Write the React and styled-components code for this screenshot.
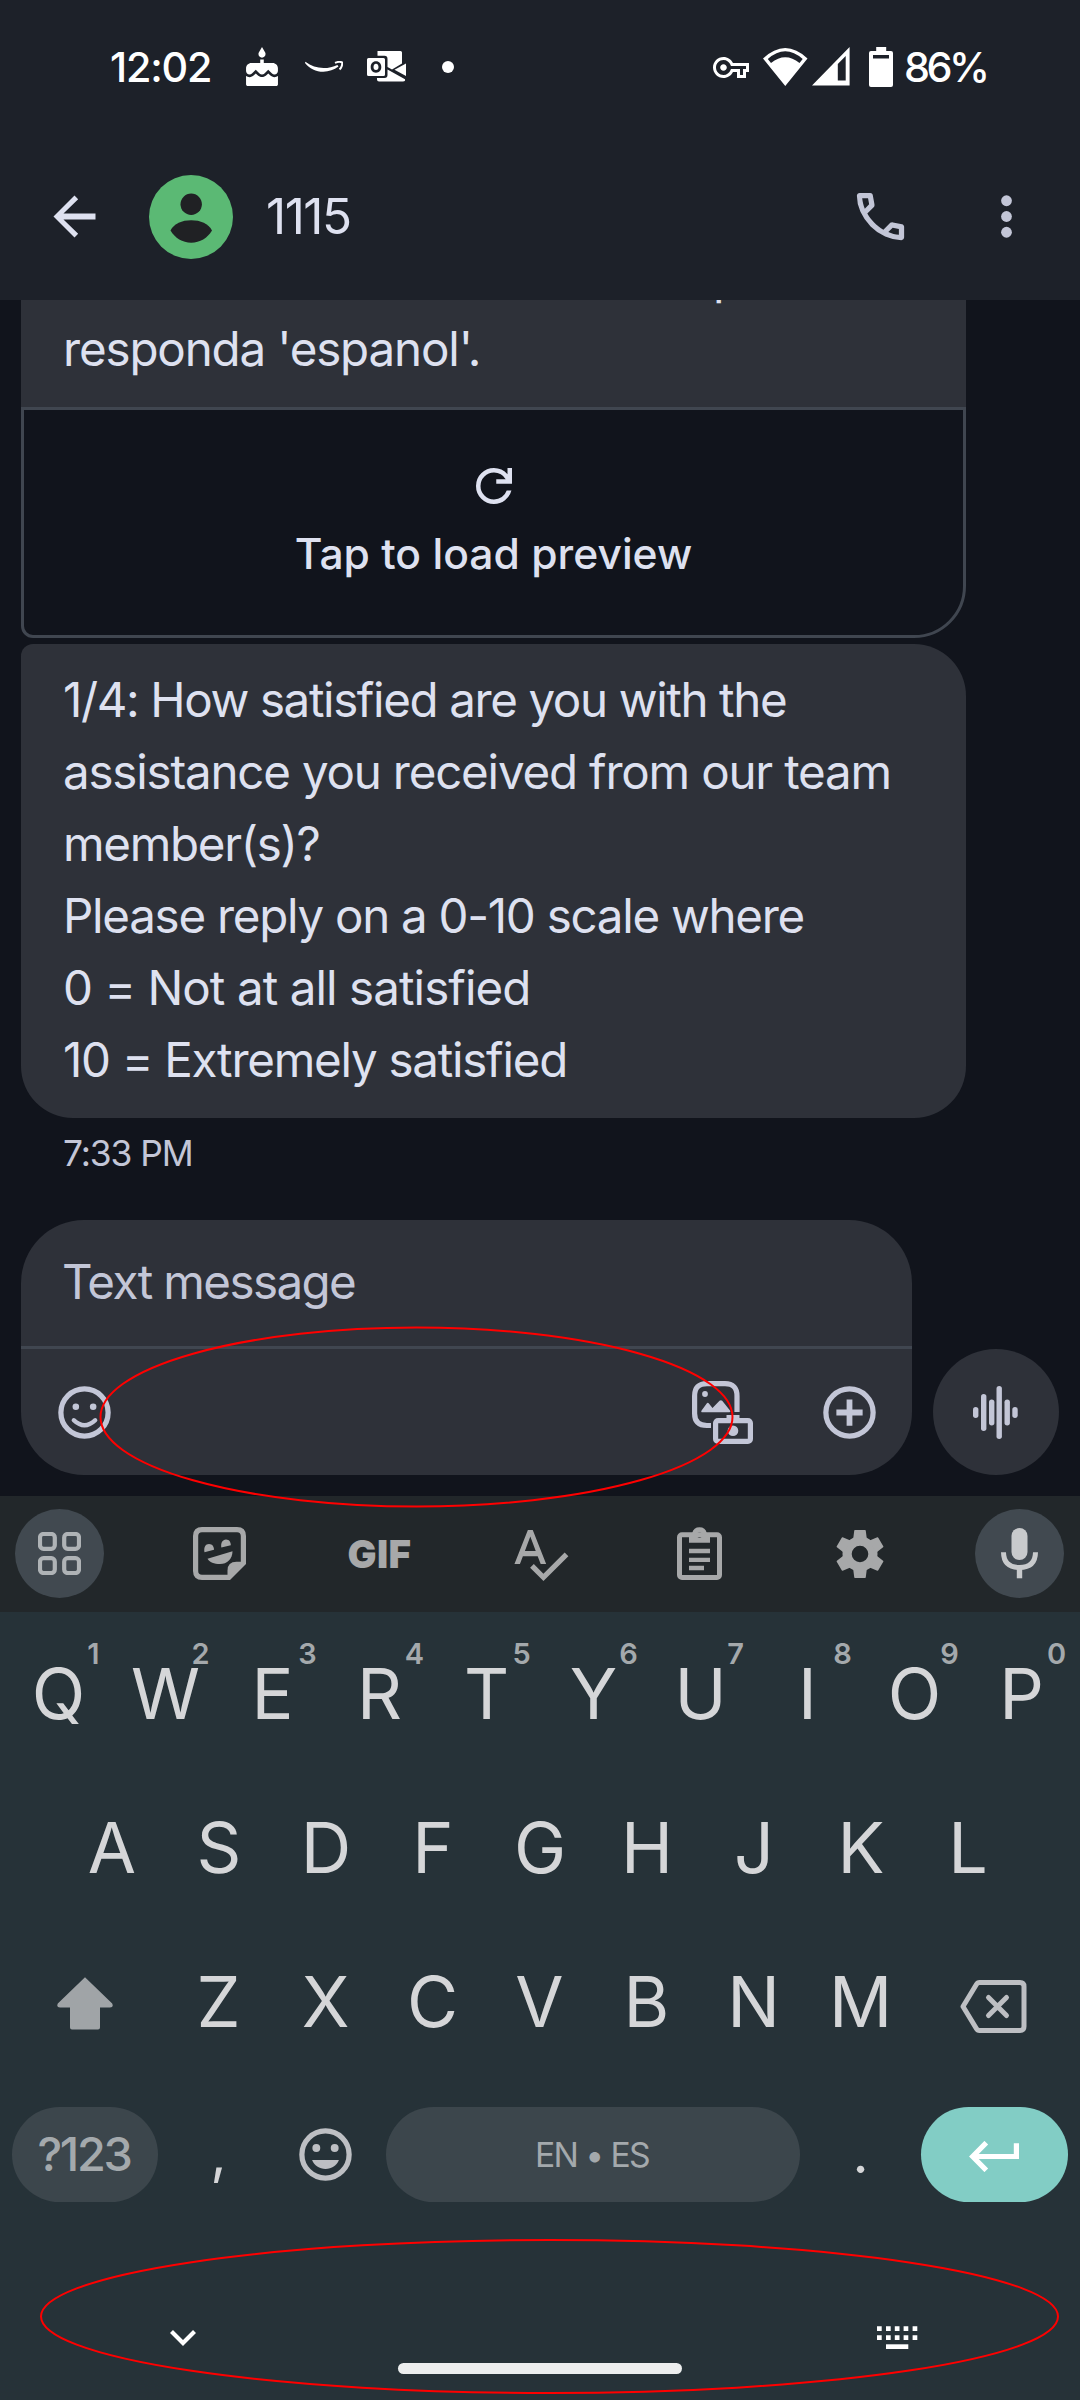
import React from "react";
import styled, { createGlobalStyle } from "styled-components";

const c = {
  header: "#1d2129",
  thread: "#11141c",
  bubble: "#2e3139",
  outline: "#404650",
  text: "#dee1f0",
  muted: "#c3c6d7",
  strip: "#22272a",
  board: "#263238",
  pill: "#3c464c",
  round: "#414950",
  key: "#d5d6d8",
  dim: "#a4a9ac",
  icon: "#a7a8a9",
  soft: "#bdbfc3",
};

const GlobalStyle = createGlobalStyle`
  * { box-sizing: border-box; }
  html, body { margin: 0; padding: 0; background: ${c.thread}; }
  body { font-family: Inter, Roboto, "Liberation Sans", sans-serif; }
  svg { display: block; flex: none; }
`;

const Screen = styled.div`
  position: relative;
  display: flex;
  flex-direction: column;
  width: 1080px;
  height: 2400px;
  overflow: hidden;
  background: ${c.thread};
`;

/* ---------- status bar ---------- */

const StatusBar = styled.div`
  display: flex;
  align-items: center;
  justify-content: space-between;
  height: 133px;
  padding-left: 110px;
  background: ${c.header};
  color: #fff;
`;

const StatusGroup = styled.div`
  display: flex;
  align-items: center;
`;

const StatusText = styled.span`
  width: ${(p) => p.$width}px;
  font-size: 41.3px;
  font-weight: 550;
  line-height: 50px;
  letter-spacing: ${(p) => p.$track}px;
  white-space: nowrap;
`;

const Slot = styled.span`
  display: block;
  margin-right: ${(p) => p.$after || 0}px;
  margin-top: ${(p) => p.$down || 0}px;
`;

const Dot = styled.span`
  width: 12px;
  height: 12px;
  border-radius: 50%;
  background: #fff;
`;

/* ---------- app bar ---------- */

const AppBar = styled.header`
  display: flex;
  align-items: center;
  height: 167px;
  padding: 0 42px 0 43px;
  background: ${c.header};
  color: ${c.muted};
`;

const Avatar = styled.div`
  width: 84px;
  height: 84px;
  margin-left: 43px;
  border-radius: 50%;
  background: #5bb974;
  color: #202124;
`;

const Title = styled.h1`
  flex: 1;
  margin: 0;
  padding: 0 0 2px 33px;
  font-size: 49.5px;
  font-weight: 400;
  line-height: 60px;
  letter-spacing: -1.5px;
  color: ${c.text};
`;

const Actions = styled.div`
  display: flex;
  gap: 63px;
`;

/* ---------- conversation ---------- */

const Thread = styled.main`
  display: flex;
  flex-direction: column;
  justify-content: flex-end;
  height: 920px;
  padding: 0 114px 42px 21px;
  overflow: hidden;
  color: ${c.text};
`;

const Bubble = styled.div`
  flex: none;
  padding: ${(p) => (p.$joined ? "0 42px 22px" : "20px 42px 22px")};
  border-radius: ${(p) => (p.$joined ? "0" : "12px 52px 52px 52px")};
  background: ${c.bubble};
`;

const Line = styled.span`
  display: block;
  padding-left: ${(p) => p.$indent || 0}px;
  font-size: 47.5px;
  line-height: 72px;
  letter-spacing: ${(p) => p.$track}px;
  white-space: nowrap;
`;

const PreviewCard = styled.button`
  flex: none;
  display: flex;
  flex-direction: column;
  align-items: center;
  height: 231px;
  margin: 0 0 6px;
  padding: 49px 0 0;
  border: 3px solid ${c.outline};
  border-radius: 0 0 52px 12px;
  background: ${c.thread};
  color: ${c.text};
  font: 500 42.6px/56px Inter, Roboto, sans-serif;
`;

const PreviewLabel = styled.span`
  margin-top: 13px;
`;

const Timestamp = styled.time`
  flex: none;
  margin: 12px 0 0 42px;
  font-size: 35.4px;
  line-height: 48px;
  letter-spacing: -1.1px;
  color: ${c.muted};
`;

/* ---------- composer ---------- */

const ComposerBar = styled.div`
  display: flex;
  align-items: flex-end;
  gap: 21px;
  height: 276px;
  padding: 0 21px 21px;
  color: ${c.muted};
`;

const Composer = styled.div`
  width: 891px;
  height: 255px;
  border-radius: 63px;
  background: ${c.bubble};
`;

const Placeholder = styled.div`
  display: flex;
  align-items: center;
  height: 129px;
  padding: 0 42px 3px 41px;
  border-bottom: 3px solid ${c.outline};
  font-size: 47.5px;
  line-height: 60px;
  letter-spacing: -1.6px;
`;

const Tools = styled.div`
  display: flex;
  align-items: center;
  gap: 65px;
  height: 126px;
  padding: 0 31px 0 32px;

  & > :first-child {
    margin-right: auto;
  }
`;

const VoiceButton = styled.button`
  display: flex;
  align-items: center;
  justify-content: center;
  width: 126px;
  height: 126px;
  padding: 0 2px 0 0;
  border: 0;
  border-radius: 50%;
  background: ${c.bubble};
  color: ${c.muted};
`;

/* ---------- keyboard ---------- */

const Strip = styled.div`
  display: flex;
  align-items: center;
  justify-content: space-between;
  height: 116px;
  padding: 0 16px 1px 15px;
  background: ${c.strip};
`;

const StripItem = styled.div`
  display: flex;
  align-items: center;
  justify-content: center;
  width: 89px;
  height: 89px;
  border-radius: 50%;
  background: ${(p) => (p.$filled ? c.round : "transparent")};
  color: ${(p) => p.$tint || c.icon};
`;

const GifLabel = styled.span`
  font-size: 38.5px;
  font-weight: 900;
  line-height: 40px;
  letter-spacing: 0.4px;
`;

const Board = styled.div`
  flex: 1;
  padding-top: 4px;
  background: ${c.board};
  color: ${c.key};
`;

const Row = styled.div`
  display: flex;
  align-items: center;
  height: 154px;
  padding: 0 ${(p) => p.$inset}px ${(p) => p.$lift || 0}px;
`;

const Key = styled.div`
  position: relative;
  display: flex;
  align-items: center;
  justify-content: center;
  width: ${(p) => p.$width || 107}px;
  height: 154px;
  padding-bottom: ${(p) => p.$lift || 0}px;
  font-size: ${(p) => p.$size || 70}px;
  color: ${(p) => p.$tint || c.key};
`;

const Hint = styled.sup`
  position: absolute;
  left: calc(50% + 20px);
  top: 22px;
  width: 30px;
  font-size: 29px;
  font-weight: 600;
  line-height: 31px;
  text-align: center;
  color: ${c.dim};
`;

const Pill = styled.div`
  display: flex;
  align-items: center;
  justify-content: center;
  width: ${(p) => p.$width}px;
  height: 95px;
  margin: 0 ${(p) => p.$after || 0}px 0 ${(p) => p.$before || 0}px;
  padding-right: 2px;
  border-radius: 48px;
  background: ${(p) => p.$fill || c.pill};
  color: ${(p) => p.$tint || c.dim};
  font-size: ${(p) => p.$size || 34}px;
  font-weight: ${(p) => p.$weight || 400};
  letter-spacing: ${(p) => p.$track || 0}px;
`;

const NavRow = styled.div`
  display: flex;
  align-items: center;
  justify-content: space-between;
  height: 118px;
  padding: 94px 162px 0 170px;
  color: #fff;
`;

const HomeHandle = styled.div`
  width: 284px;
  height: 11px;
  margin: 13px auto 0;
  border-radius: 6px;
  background: #eceeee;
`;

const Markup = styled.svg`
  position: absolute;
  inset: 0;
  pointer-events: none;
`;

/* ---------- icons ---------- */

const Glyph = ({ w = 63, h = w, box = "0 0 24 24", children }) => (
  <svg width={w} height={h} viewBox={box} fill="currentColor">{children}</svg>
);
const Px = ({ w, h, children }) => <Glyph w={w} h={h} box={`0 0 ${w} ${h}`}>{children}</Glyph>;
const line = { fill: "none", stroke: "currentColor" };

const Cake = () => (
  <Glyph w={32} h={39} box="3 0 18 22">
    <path d="M12 6c1.11 0 2-.9 2-2 0-.38-.1-.73-.29-1.03L12 0l-1.71 2.97c-.19.3-.29.65-.29 1.03 0 1.1.9 2 2 2zm4.6 9.99l-1.07-1.07-1.08 1.07c-1.3 1.3-3.58 1.31-4.89 0l-1.07-1.07-1.09 1.07C6.75 16.64 5.88 17 4.96 17c-.73 0-1.4-.23-1.96-.61V21c0 .55.45 1 1 1h16c.55 0 1-.45 1-1v-4.61c-.56.38-1.23.61-1.96.61-.92 0-1.79-.36-2.44-1.01zM18 9h-5V7h-2v2H6c-1.66 0-3 1.34-3 3v1.54c0 1.08.88 1.96 1.96 1.96.52 0 1.02-.2 1.38-.57l2.14-2.13 2.13 2.13c.74.74 2.03.74 2.77 0l2.14-2.13 2.13 2.13c.37.37.86.57 1.38.57 1.08 0 1.96-.88 1.96-1.96V12C21 10.34 19.66 9 18 9z" />
  </Glyph>
);
const Smile = () => (
  <Px w={38} h={11}>
    <path d="M.4 .8C6 5.1 12 7 18.500 7c5 0 9.800-1.100 13.900-3.100l1.100 1.700C29 8.800 24 10.700 18.300 10.700 11 10.700 4.500 7.400 0 1.900z" />
    <path d="M30 1.900c2.500-1.100 5.800-1.100 7.100-.5.500 2-.6 5.400-2.600 7" {...line} strokeWidth="2" />
  </Px>
);
const Outlook = () => (
  <Px w={39} h={31}>
    <path d="M10.500 0H33.500Q35 0 35 1.500V12.500L25 18.500 20.500 16V8Q20.500 4.700 17.500 4.700H10.500Z" />
    <path d="M39 12.500V25L27.500 18.700Z" />
    <path d="M20.500 18.500L38 28.300Q38.500 30.500 36 30.500H12Q10 30.500 10 28.500V27H17.500Q20.500 27 20.500 24Z" />
    <path fillRule="evenodd" d="M1.500 7H16.500Q18 7 18 8.500V23.500Q18 25 16.500 25H1.500Q0 25 0 23.500V8.500Q0 7 1.500 7ZM9 10.200C5.700 10.200 3.700 12.700 3.700 16S5.700 21.700 9 21.700 14.300 19.300 14.300 16 12.300 10.200 9 10.200ZM9 12.800C10.700 12.800 11.500 14.200 11.500 16S10.700 19.100 9 19.100 6.500 17.800 6.500 16 7.300 12.800 9 12.800Z" />
  </Px>
);
const VpnKey = () => (
  <Glyph w={36} h={21} box="0 5 24 14">
    <path d="M22 19h-6v-4h-2.680c-1.140 2.420-3.600 4-6.320 4-3.860 0-7-3.140-7-7s3.140-7 7-7c2.720 0 5.170 1.580 6.320 4H24v6h-2v4zm-4-2h2v-4h2v-2H11.940l-.23-.67C11.010 8.340 9.110 7 7 7c-2.760 0-5 2.240-5 5s2.240 5 5 5c2.110 0 4.010-1.340 4.710-3.330l.23-.67H18v4zM7 14.200c-1.210 0-2.200-.99-2.200-2.200s.99-2.200 2.200-2.200 2.200.99 2.200 2.200-.99 2.200-2.200 2.200z" />
  </Glyph>
);
const Wifi = () => (
  <Px w={45} h={38}>
    <path fillRule="evenodd" d="M0 10.500Q22.250-10.500 44.500 10.500L22.250 38ZM4.800 11Q22.250-4.500 39.700 11L36.500 15Q22.250 3.500 8 15Z" />
  </Px>
);
const Signal = () => (
  <Px w={38} h={39}>
    <path fillRule="evenodd" d="M0 38.500L37.600 0V38.500ZM25.800 17L33.700 9V33.500H25.800Z" />
  </Px>
);
const Battery = () => (
  <Px w={24} h={40}>
    <path fillRule="evenodd" d="M7.200 0H17.200V4H22Q24 4 24 6V38Q24 40 22 40H2Q0 40 0 38V6Q0 4 2 4H7.200ZM4 8V11.500H20V8Z" />
  </Px>
);
const Back = () => (
  <Glyph><path fill={c.text} d="M20 10.900H7.800l5.600-5.500L12 4l-8 8 8 8 1.400-1.400-5.600-5.500H20z" /></Glyph>
);
const Person = () => (
  <Px w={84} h={84}>
    <circle cx="42.200" cy="29.200" r="10.700" />
    <path d="M21.500 55.500C25 48.500 33 45.300 42.200 45.300S59.500 48.500 63 55.500C58.500 63 51 67.700 42.200 67.700S26 63 21.500 55.500Z" />
  </Px>
);
const Call = () => (
  <Glyph box="0 -960 960 960">
    <path d="M798-120q-125 0-247-54.500T329-329Q229-429 174.500-551T120-798q0-18 12-30t30-12h162q14 0 25 9.500t13 22.500l26 140q2 16-1 27t-11 19l-97 98q20 37 47.500 71.500T387-386q31 31 65 57.500t72 48.500l94-94q9-9 23.500-13.500T670-390l138 28q14 4 23 14.500t9 23.500v162q0 18-12 30t-30 12ZM241-600l66-66-17-94h-89q5 41 14 81t26 79Zm358 358q39 17 79.500 27t81.500 13v-88l-94-19-67 67Z" />
  </Glyph>
);
const More = () => (
  <Glyph><circle cx="12" cy="6" r="2.050" /><circle cx="12" cy="12" r="2.050" /><circle cx="12" cy="18" r="2.050" /></Glyph>
);
const Refresh = () => (
  <Glyph w={54} box="0 -960 960 960">
    <path d="M480-160q-134 0-227-93t-93-227q0-134 93-227t227-93q69 0 132 28.500T720-690v-110h80v280H520v-80h168q-32-56-87.500-88T480-720q-100 0-170 70t-70 170q0 100 70 170t170 70q77 0 139-44t87-116h84q-28 106-114 173t-196 67Z" />
  </Glyph>
);
const Emoticon = () => (
  <Glyph>
    <circle cx="12" cy="12" r="9" {...line} strokeWidth="2" />
    <circle cx="8.700" cy="9.800" r="1.250" /><circle cx="15.300" cy="9.800" r="1.250" />
    <path d="M7.900 14.900Q12 18.800 16.100 14.900" {...line} strokeWidth="1.600" strokeLinecap="round" />
  </Glyph>
);
const Gallery = () => (
  <Px w={61} h={63}>
    <path d="M45 31V15Q45 2.600 33 2.600H15Q2.600 2.600 2.600 15V32.500Q2.600 44.500 15 44.500H19" {...line} strokeWidth="5.200" />
    <circle cx="13" cy="13" r="2.900" />
    <path d="M10.500 31.300Q8.500 31 9.600 29.400L14.700 22.500Q15.800 21.200 16.900 22.500L20.500 27 27.500 19.800Q28.900 18.500 30.200 19.800L38 29.400Q39 31 37.500 31.300Z" />
    <path d="M34.500 38V34H47.500V38Z" />
    <rect x="23.600" y="39.600" width="34.800" height="20.800" rx="2.500" {...line} strokeWidth="5.200" />
    <circle cx="41" cy="49.700" r="5.300" />
  </Px>
);
const AddCircle = () => (
  <Glyph>
    <circle cx="12" cy="12" r="9" {...line} strokeWidth="2" />
    <path d="M10.900 7H13.100V10.900H17V13.100H13.100V17H10.900V13.100H7V10.900H10.900Z" />
  </Glyph>
);
const WAVES = [[0, 21, 11], [8, 8, 37], [16, 13.5, 26], [23.5, 0, 53], [31.5, 13.5, 26], [39.3, 21, 11]];
const Waveform = () => (
  <Px w={45} h={53}>
    {WAVES.map(([x, y, h]) => <rect key={x} x={x} y={y} width="5.400" height={h} rx="2.700" />)}
  </Px>
);
const Apps = () => (
  <Px w={43} h={43}>
    {[[2, 2], [26.2, 2], [2, 26.2], [26.2, 26.2]].map(([x, y]) => (
      <rect key={`${x}-${y}`} x={x} y={y} width="14.800" height="14.800" rx="3.500" {...line} strokeWidth="4.200" />
    ))}
  </Px>
);
const Sticker = () => (
  <Px w={53} h={53}>
    <path d="M37 50.400H9Q2.600 50.400 2.600 44V9Q2.600 2.600 9 2.600H44Q50.400 2.600 50.400 9V37" {...line} strokeWidth="5.200" />
    <path d="M34.500 53V43.500Q34.500 34.700 43.500 34.700H53V37L37 53Z" />
    <path d="M11.500 25.200C10.500 20.500 12.500 17 16 17S21 20 21 22.800Z" />
    <path d="M28.300 20.500C27.500 16 29.500 12.400 33 12.400S37.800 15.400 37.800 18.200Z" />
    <path d="M14.500 31.700L39.500 24.200C39.500 32 34 37 27 37 21 37 16.500 35 14.500 31.700Z" />
  </Px>
);
const Spellcheck = () => (
  <Glyph>
    <path d="M12.450 16h2.090L9.430 3H7.570L2.460 16h2.090l1.120-3h5.640l1.140 3zm-6.020-5L8.500 5.480 10.570 11H6.430zm15.160.59l-8.090 8.090L9.830 16l-1.410 1.410 5.090 5.090L23 13l-1.410-1.410z" />
  </Glyph>
);
const Clipboard = () => (
  <Px w={45} h={53}>
    <rect x="2.500" y="7.800" width="40" height="42.700" rx="2.500" {...line} strokeWidth="5" />
    <path fillRule="evenodd" d="M12 6H15.200A7.500 7.500 0 0 1 29.800 6H33V15.700H12ZM22.500 5.300a2.700 2.700 0 1 0 0 5.400 2.700 2.700 0 1 0 0-5.400Z" />
    <path d="M12 21.800H33V26.200H12ZM12 30.700H33V35H12ZM12 38.800H27V43.200H12Z" />
  </Px>
);
const Gear = () => (
  <Glyph w={48} box="-24 -24 48 48">
    <circle r="12.900" {...line} strokeWidth="9.200" />
    {[0, 60, 120, 180, 240, 300].map((a) => (
      <path key={a} transform={`rotate(${a})`} d="M-5-24H5Q5.700-24 5.800-23.300L6.800-15H-6.800L-5.800-23.300Q-5.700-24-5-24Z" />
    ))}
  </Glyph>
);
const Mic = () => (
  <Px w={37} h={51}>
    <rect x="10.500" y="0" width="16" height="32" rx="8" />
    <path d="M2.500 24.300Q2.700 39.500 18.500 39.500T34.500 24.300" {...line} strokeWidth="5" />
    <path d="M15.800 39H21.200V50.300H15.800Z" />
  </Px>
);
const Shift = () => (
  <Px w={56} h={53}>
    <path d="M28 .3L55.200 26.500Q57 30.500 53 30.500H43V50.500Q43 52.500 41 52.500H15Q13 52.500 13 50.500V30.500H3Q-1 30.500 .8 26.500Z" />
  </Px>
);
const Backspace = () => (
  <Px w={67} h={53}>
    <path d="M19.500 2.600H60Q64 2.600 64 6.600V46.400Q64 50.400 60 50.400H19.500Q17.500 50.400 16.500 48.700L3 26.500 16.500 4.300Q17.500 2.600 19.500 2.600Z" {...line} strokeWidth="5" strokeLinejoin="round" />
    <path d="M28.500 17.500L46.500 35.500M46.500 17.500L28.500 35.500" {...line} strokeWidth="5" strokeLinecap="round" />
  </Px>
);
const Mood = () => (
  <Glyph>
    <circle cx="12" cy="12" r="9" {...line} strokeWidth="2" />
    <circle cx="8.500" cy="9.500" r="1.500" /><circle cx="15.500" cy="9.500" r="1.500" />
    <path d="M12 17.500c2.330 0 4.310-1.300 5.110-3.400H6.890c.8 2.100 2.780 3.400 5.110 3.400z" />
  </Glyph>
);
const Enter = () => (
  <Px w={50} h={31}>
    <path d="M17.300 1.700L3.700 15.500 17.300 29.300M4 15.500H47.400V2.300" {...line} strokeWidth="5.200" />
  </Px>
);
const Chevron = () => (
  <Px w={26} h={16}><path d="M1.500 1.500L13 13 24.500 1.500" {...line} strokeWidth="4.200" /></Px>
);
const KeyboardSwitch = () => (
  <Px w={41} h={24}>
    {[0, 9, 17.8, 26.6, 35.6].map((x) => (
      <path key={x} d={`M${x} .3h4.7v4.8h-4.7zM${x} 9.3h4.7v4.8h-4.7z`} />
    ))}
    <path d="M9 18.300H31.300V23H9Z" />
  </Px>
);

/* ---------- data ---------- */

const SURVEY = [
  ["1/4: How satisfied are you with the", -1.38],
  ["assistance you received from our team", -1.2],
  ["member(s)?", -1.3],
  ["Please reply on a 0-10 scale where", -1.27],
  ["0 = Not at all satisfied", -0.92],
  ["10 = Extremely satisfied", -1.25],
];

export default function App() {
  return (
    <Screen>
      <GlobalStyle />
      <StatusBar>
        <StatusGroup>
          <StatusText $width={136} $track={-1.2}>12:02</StatusText>
          <Slot $after={27}><Cake /></Slot>
          <Slot $after={24}><Smile /></Slot>
          <Slot $after={36}><Outlook /></Slot>
          <Dot />
        </StatusGroup>
        <StatusGroup>
          <Slot $after={14} $down={2}><VpnKey /></Slot>
          <Slot $after={4}><Wifi /></Slot>
          <Slot $after={19}><Signal /></Slot>
          <Slot $after={11}><Battery /></Slot>
          <StatusText $width={176} $track={-3.5}>86%</StatusText>
        </StatusGroup>
      </StatusBar>

      <AppBar>
        <Back />
        <Avatar><Person /></Avatar>
        <Title>1115</Title>
        <Actions><Call /><More /></Actions>
      </AppBar>

      <Thread>
        <Bubble $joined>
          <Line $indent={650}>p</Line>
          <Line $track={-1.15}>responda 'espanol'.</Line>
        </Bubble>
        <PreviewCard>
          <Refresh />
          <PreviewLabel>Tap to load preview</PreviewLabel>
        </PreviewCard>
        <Bubble>
          {SURVEY.map(([text, track]) => <Line key={text} $track={track}>{text}</Line>)}
        </Bubble>
        <Timestamp>7:33 PM</Timestamp>
      </Thread>

      <ComposerBar>
        <Composer>
          <Placeholder>Text message</Placeholder>
          <Tools><Emoticon /><Gallery /><AddCircle /></Tools>
        </Composer>
        <VoiceButton><Waveform /></VoiceButton>
      </ComposerBar>

      <Strip>
        <StripItem $filled $tint="#afb3b6"><Apps /></StripItem>
        <StripItem><Sticker /></StripItem>
        <StripItem><GifLabel>GIF</GifLabel></StripItem>
        <StripItem><Spellcheck /></StripItem>
        <StripItem><Clipboard /></StripItem>
        <StripItem><Gear /></StripItem>
        <StripItem $filled $tint="#c8cacc"><Mic /></StripItem>
      </Strip>

      <Board>
        <Row $inset={5}>
          {[..."QWERTYUIOP"].map((k, i) => <Key key={k}>{k}<Hint>{(i + 1) % 10}</Hint></Key>)}
        </Row>
        <Row $inset={58.5}>
          {[..."ASDFGHJKL"].map((k) => <Key key={k}>{k}</Key>)}
        </Row>
        <Row $inset={5}>
          <Key $width={160} $tint="#a0a4a7"><Slot $down={5}><Shift /></Slot></Key>
          {[..."ZXCVBNM"].map((k) => <Key key={k}>{k}</Key>)}
          <Key $width={160} $tint={c.soft}><Slot $down={11} $after={2}><Backspace /></Slot></Key>
        </Row>
        <Row $inset={12} $lift={2}>
          <Pill $width={146} $after={7} $size={46.8} $weight={500} $track={-2.3}>?123</Pill>
          <Key $size={56} $lift={3}>,</Key>
          <Key $tint={c.soft}><Mood /></Key>
          <Pill $width={414} $before={7} $size={33.7} $track={-1.6}>EN • ES</Pill>
          <Key $width={121} $size={56} $lift={3}>.</Key>
          <Pill $width={147} $fill="#82cdc5" $tint="#fff"><Slot $down={5}><Enter /></Slot></Pill>
        </Row>
        <NavRow><Chevron /><KeyboardSwitch /></NavRow>
        <HomeHandle />
      </Board>

      <Markup width="1080" height="2400" viewBox="0 0 1080 2400" fill="none" stroke="#f00" strokeWidth="2">
        <ellipse cx="416.500" cy="1417" rx="316" ry="89.500" />
        <ellipse cx="549.500" cy="2316.500" rx="508.500" ry="76.500" />
      </Markup>
    </Screen>
  );
}
